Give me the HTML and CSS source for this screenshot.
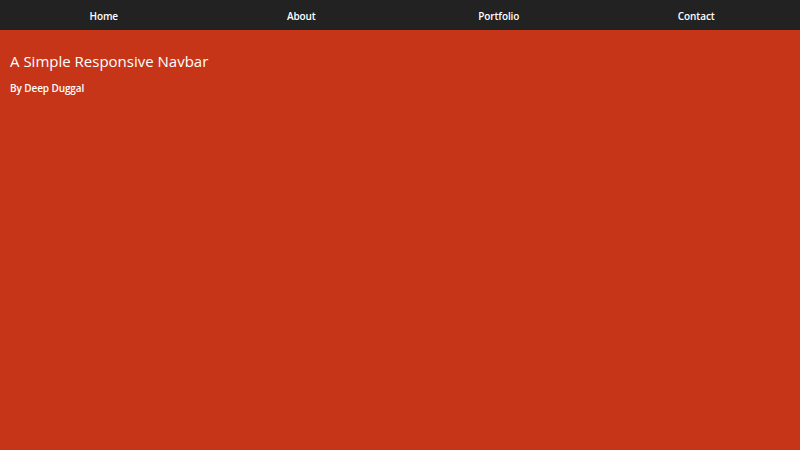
FILE: index.html
```html
<!DOCTYPE html>
<html>
<head>
<meta charset="utf-8">
<link rel="stylesheet" href="styles.css">
</head>
<body>
<nav class="navbar">
  <a class="nav-link" href="#">Home</a>
  <a class="nav-link" href="#">About</a>
  <a class="nav-link" href="#">Portfolio</a>
  <a class="nav-link" href="#">Contact</a>
</nav>
<main class="content">
  <h1 class="title">A Simple Responsive Navbar</h1>
  <p class="byline">By Deep Duggal</p>
</main>
</body>
</html>
```
FILE: styles.css
```css
html, body {
  margin: 0;
  padding: 0;
  height: 100%;
}
body {
  background: #c63518;
  font-family: "Open Sans", "Noto Sans", sans-serif;
  color: #fff;
}
.navbar {
  display: grid;
  grid-template-columns: repeat(4, 1fr);
  height: 30px;
  padding: 0 5px;
  background: #222222;
}
.nav-link {
  display: flex;
  align-items: center;
  justify-content: center;
  color: #fff;
  text-decoration: none;
  font-size: 10px;
  font-weight: 600;
  letter-spacing: -0.1px;
  padding-top: 1px;
}
.content {
  padding: 0 10px;
}
.title {
  margin: 20px 0 0;
  font-size: 15px;
  font-weight: 500;
  line-height: 22px;
}
.byline {
  margin: 8px 0 0;
  font-size: 10px;
  font-weight: 600;
  letter-spacing: -0.1px;
  line-height: 16px;
}
```
